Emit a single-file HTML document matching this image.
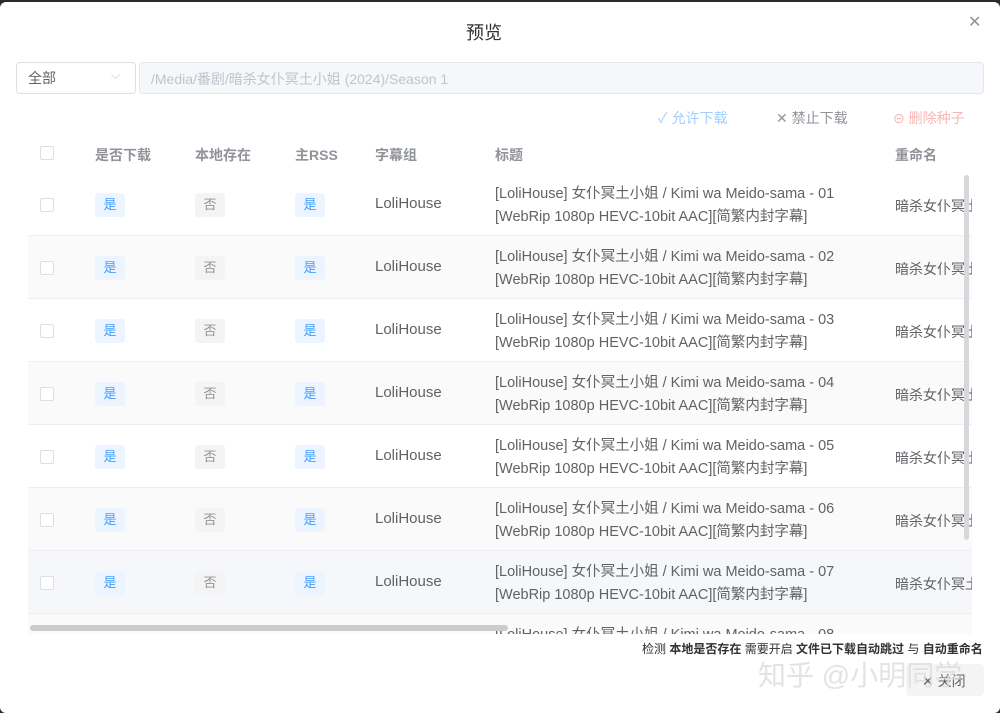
<!DOCTYPE html>
<html><head><meta charset="utf-8"><style>
*{box-sizing:border-box;margin:0;padding:0}
body{width:1000px;height:713px;background:#2b2b2b;font-family:"Liberation Sans","Noto Sans CJK SC",sans-serif;overflow:hidden;position:relative}
.dlg{position:absolute;left:0;top:2px;width:1000px;height:711px;background:#fff;border-radius:6px}
.t{position:absolute;font-size:14px;color:#606266;white-space:nowrap}
.tag{position:absolute;width:30px;height:24px;border-radius:3px;font-size:13px;text-align:center;line-height:24px}
.y{background:#ecf5ff;color:#409eff}
.n{background:#f4f4f5;color:#909399}
.cb{position:absolute;width:14px;height:14px;border:1px solid #dcdfe6;border-radius:2px;background:#fff}
.row{position:absolute;left:0;width:944px;height:63px;border-bottom:1px solid #ebeef5}
</style></head><body>
<div class="dlg">
<div class="t" style="left:466px;top:17px;font-size:18px;color:#303133">预览</div>
<div class="t" style="left:968px;top:10px;font-size:16px;color:#909399">✕</div>
<div style="position:absolute;left:16px;top:60px;width:120px;height:32px;border:1px solid #dcdfe6;border-radius:4px"></div>
<div class="t" style="left:28px;top:66px;color:#606266">全部</div>
<div class="t" style="left:111px;top:66px;color:#c0c4cc;font-size:12px">⌵</div>
<div style="position:absolute;left:139px;top:60px;width:845px;height:32px;border:1px solid #e4e7ed;border-radius:4px;background:#f5f7fa"></div>
<div class="t" style="left:151px;top:67px;color:#c0c4cc">/Media/番剧/暗杀女仆冥土小姐 (2024)/Season 1</div>
<div class="t" style="left:658px;top:106px;color:#a0cfff">✓ 允许下载</div>
<div class="t" style="left:776px;top:106px;color:#909399">✕ 禁止下载</div>
<div class="t" style="left:893px;top:106px;color:#fab6b6">⊝ 删除种子</div>
<div style="position:absolute;left:28px;top:135px;width:944px;height:37px;overflow:hidden">
<div style="position:absolute;left:0;top:0;width:944px;height:37px;border-bottom:1px solid #ebeef5"></div>
<div class="cb" style="left:12px;top:9px"></div>
<div class="t" style="left:67px;top:8px;color:#909399;font-weight:bold">是否下载</div>
<div class="t" style="left:167px;top:8px;color:#909399;font-weight:bold">本地存在</div>
<div class="t" style="left:267px;top:8px;color:#909399;font-weight:bold">主RSS</div>
<div class="t" style="left:347px;top:8px;color:#909399;font-weight:bold">字幕组</div>
<div class="t" style="left:467px;top:8px;color:#909399;font-weight:bold">标题</div>
<div class="t" style="left:867px;top:8px;color:#909399;font-weight:bold">重命名</div>
</div>
<div style="position:absolute;left:28px;top:171px;width:944px;height:461px;overflow:hidden" id="rows">
</div>
<div style="position:absolute;left:30px;top:623px;width:478px;height:6px;background:#c9cbcf;border-radius:3px"></div>
<div style="position:absolute;left:964px;top:173px;width:5px;height:365px;background:#d7d8db;border-radius:3px"></div>
<div class="t" style="left:642px;top:638px;font-size:12px;color:#303133">检测 <b>本地是否存在</b> 需要开启 <b>文件已下载自动跳过</b> 与 <b>自动重命名</b></div>
<div style="position:absolute;left:906px;top:662px;width:78px;height:32px;background:#f4f4f5;border-radius:4px"></div>
<div class="t" style="left:922px;top:669px;color:#606266">✕ 关闭</div>
<div class="t" style="left:758px;top:652px;font-size:28px;color:rgba(220,220,220,.8)">知乎 @小明同学</div>
</div>
<script>
var h='';for(var i=0;i<8;i++){var yy=i*63;var bg=i%2==1?'#fafafa':'#fff';if(i==6)bg='#f5f7fa';
h+='<div class="row" style="top:'+yy+'px;background:'+bg+'"></div>';
h+='<div class="cb" style="left:12px;top:'+(yy+25)+'px"></div>';
h+='<div class="tag y" style="left:67px;top:'+(yy+20)+'px">是</div>';
h+='<div class="tag n" style="left:167px;top:'+(yy+20)+'px">否</div>';
h+='<div class="tag y" style="left:267px;top:'+(yy+20)+'px">是</div>';
h+='<div class="t" style="left:347px;top:'+(yy+22)+'px;font-size:15px">LoliHouse</div>';
h+='<div class="t" style="left:467px;top:'+(yy+10)+'px;font-size:14.5px;line-height:23px">[LoliHouse] 女仆冥土小姐 / Kimi wa Meido-sama - 0'+(i+1)+'<br>[WebRip 1080p HEVC-10bit AAC][简繁内封字幕]</div>';
h+='<div class="t" style="left:867px;top:'+(yy+23)+'px">暗杀女仆冥土</div>';}
document.getElementById('rows').innerHTML=h;
</script>
</body></html>
